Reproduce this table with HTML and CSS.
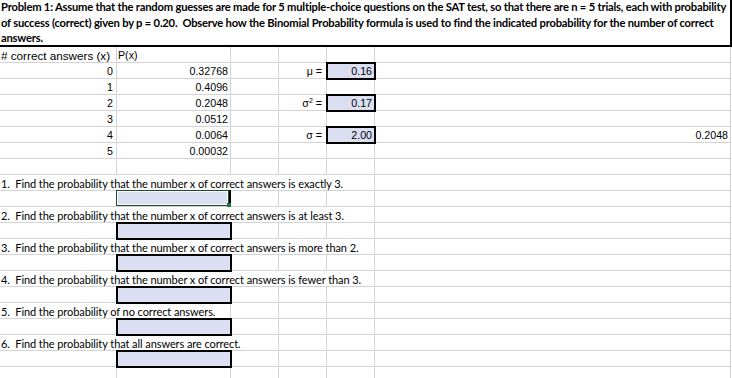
FILE: index.html
```html
<!DOCTYPE html>
<html lang="en">
<head>
<meta charset="utf-8">
<title>Binomial Probability</title>
<link rel="stylesheet" href="styles.css">
</head>
<body>
<div class="problem"><p>Problem 1: Assume that the random guesses are made for 5 multiple-choice questions on the SAT test, so that there are n = 5 trials, each with probability<br>of success (correct) given by p = 0.20.&nbsp; Observe how the Binomial Probability formula is used to find the indicated probability for the number of correct<br>answers.</p></div>
<div class="sheet">
  <div class="c hdr">#&nbsp;correct answers (x)</div><div class="c">P(x)</div><div class="c"></div><div class="c"></div><div class="c"></div><div class="c"></div>

  <div class="c r pr">0</div><div class="c r">0.32768</div><div class="c"></div><div class="c r lbl">μ =</div><div class="c r box">0.16</div><div class="c"></div>
  <div class="c r pr">1</div><div class="c r">0.4096</div><div class="c"></div><div class="c"></div><div class="c"></div><div class="c"></div>
  <div class="c r pr">2</div><div class="c r">0.2048</div><div class="c"></div><div class="c r lbl">σ<sup>2</sup> =</div><div class="c r box">0.17</div><div class="c"></div>
  <div class="c r pr">3</div><div class="c r">0.0512</div><div class="c"></div><div class="c"></div><div class="c"></div><div class="c"></div>
  <div class="c r pr">4</div><div class="c r">0.0064</div><div class="c"></div><div class="c r lbl">σ =</div><div class="c r box">2.00</div><div class="c r">0.2048</div>
  <div class="c r pr">5</div><div class="c r">0.00032</div><div class="c"></div><div class="c"></div><div class="c"></div><div class="c"></div>
  <div class="c"></div><div class="c"></div><div class="c"></div><div class="c"></div><div class="c"></div><div class="c"></div>

  <div class="c q span5">1.&nbsp; Find the probability that the number x of correct answers is exactly 3.</div><div class="c"></div>
  <div class="c"></div><div class="c sel"><span class="selbox"></span><span class="handle"></span></div><div class="c"></div><div class="c"></div><div class="c"></div><div class="c"></div>

  <div class="c q span5">2.&nbsp; Find the probability that the number x of correct answers is at least 3.</div><div class="c"></div>
  <div class="c"></div><div class="c box"></div><div class="c"></div><div class="c"></div><div class="c"></div><div class="c"></div>

  <div class="c q span5">3.&nbsp; Find the probability that the number x of correct answers is more than 2.</div><div class="c"></div>
  <div class="c"></div><div class="c box"></div><div class="c"></div><div class="c"></div><div class="c"></div><div class="c"></div>

  <div class="c q span5">4.&nbsp; Find the probability that the number x of correct answers is fewer than 3.</div><div class="c"></div>
  <div class="c"></div><div class="c box"></div><div class="c"></div><div class="c"></div><div class="c"></div><div class="c"></div>

  <div class="c q span2">5.&nbsp; Find the probability of no correct answers.</div><div class="c"></div><div class="c"></div><div class="c"></div><div class="c"></div>
  <div class="c"></div><div class="c box"></div><div class="c"></div><div class="c"></div><div class="c"></div><div class="c"></div>

  <div class="c q span3">6.&nbsp; Find the probability that all answers are correct.</div><div class="c"></div><div class="c"></div><div class="c"></div>
  <div class="c"></div><div class="c box"></div><div class="c"></div><div class="c"></div><div class="c"></div><div class="c"></div>

  <div class="c"></div><div class="c"></div><div class="c"></div><div class="c"></div><div class="c"></div><div class="c"></div>
</div>
</body>
</html>
```

FILE: styles.css
```css
html, body {
  margin: 0;
  padding: 0;
  background: #ffffff;
}

body {
  width: 732px;
  height: 378px;
  overflow: hidden;
  color: #000000;
}

.problem {
  box-sizing: border-box;
  width: 732px;
  height: 47px;
  border-right: 2px solid #000000;
  border-bottom: 2px solid #000000;
  overflow: hidden;
  padding-left: 1px;
  font-family: Lato, "Liberation Sans", sans-serif;
  font-weight: 700;
  font-size: 11.2px;
  letter-spacing: -0.2px;
  line-height: 15.6px;
  white-space: nowrap;
}

.problem p {
  margin: -1px 0 0;
}

.sheet {
  display: grid;
  grid-template-columns: 117px 114px 48px 48px 48px 356px;
  grid-auto-rows: 16px;
}

.c {
  box-sizing: border-box;
  border-right: 1px solid #d4d4d4;
  border-bottom: 1px solid #d4d4d4;
  padding: 1px 2px 0 1px;
  font-family: "Liberation Sans", Arial, sans-serif;
  font-size: 10.67px;
  line-height: 15px;
  white-space: nowrap;
  overflow: hidden;
}

.hdr {
  font-size: 11.7px;
}

.r {
  text-align: right;
}

.pr {
  padding-right: 3px;
}

.lbl {
  padding-right: 4px;
}

.lbl sup {
  font-size: 7px;
  line-height: 0;
  vertical-align: 4px;
}

.q {
  font-family: Lato, "Liberation Sans", sans-serif;
  font-size: 11px;
  letter-spacing: -0.08px;
}

.span5 { grid-column: span 5; }
.span3 { grid-column: span 3; }
.span2 { grid-column: span 2; }

.box,
.sel {
  position: relative;
  z-index: 1;
  overflow: visible;
  background: #dadff2;
}

.box::after {
  content: "";
  position: absolute;
  top: -1px;
  left: -1px;
  right: -2px;
  bottom: -2px;
  border: 2px solid #000000;
}

.sel::after {
  content: "";
  position: absolute;
  top: -1px;
  bottom: -1px;
  right: -1px;
  width: 2px;
  background: #000000;
}

.selbox {
  position: absolute;
  top: -1px;
  left: -1px;
  right: 1px;
  bottom: 0;
  border: 1px solid #1d4a30;
  box-shadow: inset 0 0 0 1px #ffffff;
  z-index: 2;
}

.handle {
  position: absolute;
  right: -1px;
  bottom: -1px;
  width: 4px;
  height: 4px;
  background: #217346;
  z-index: 3;
}
```
